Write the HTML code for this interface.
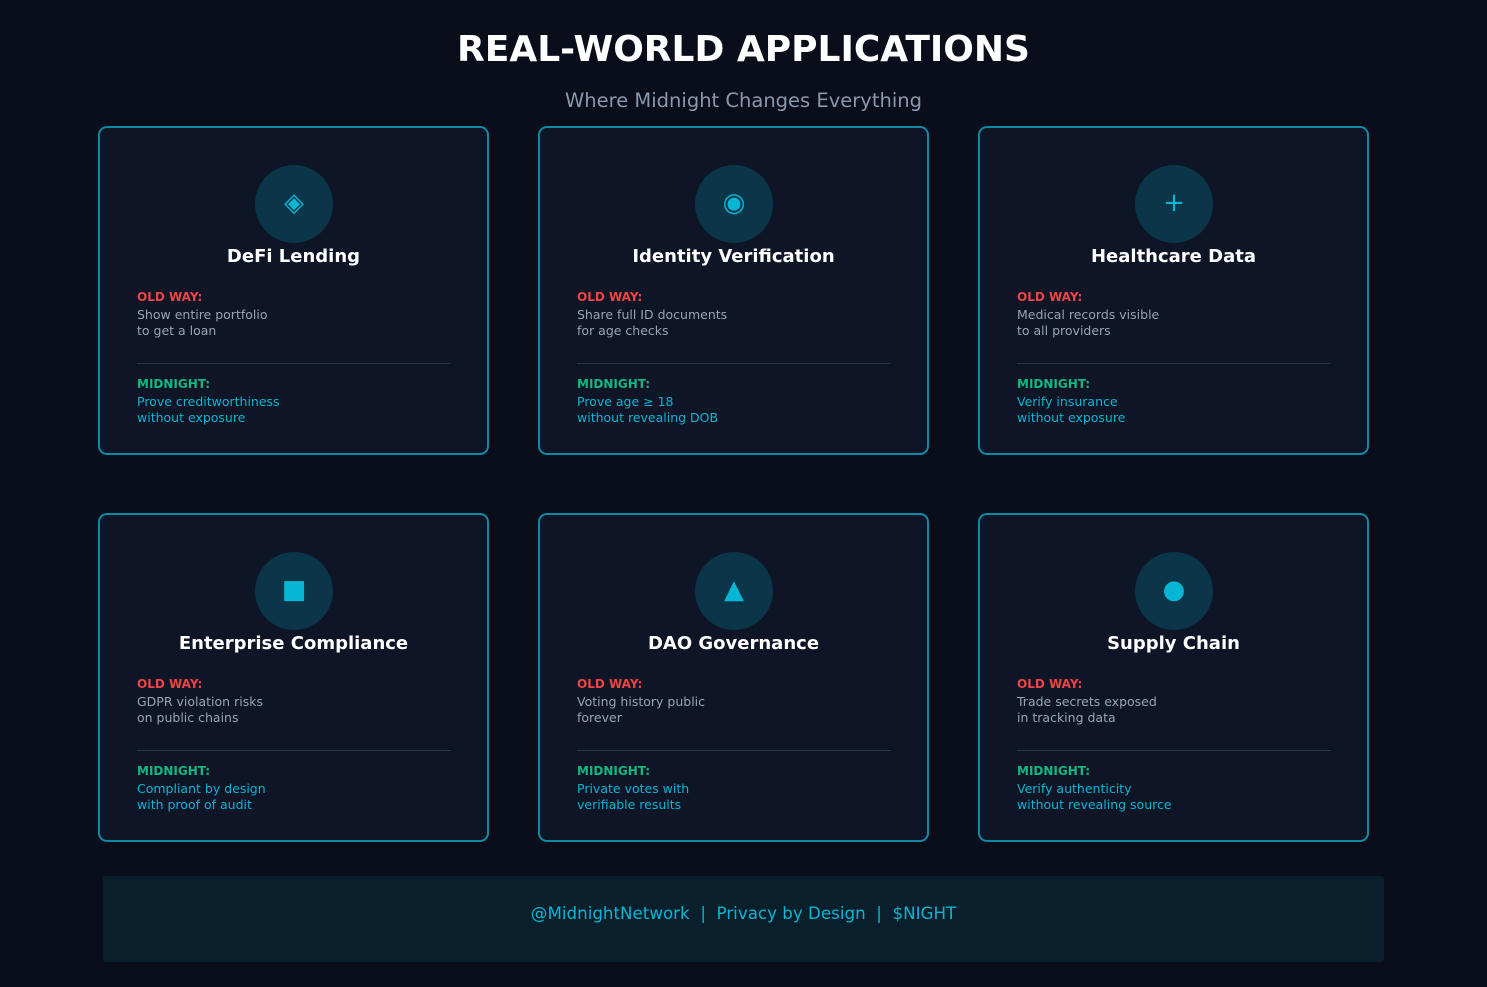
<!DOCTYPE html>
<html><head><meta charset="utf-8"><style>
*{margin:0;padding:0;box-sizing:border-box}
body{width:1487px;height:987px;background:#0a0e1a;font-family:"DejaVu Sans","Liberation Sans",sans-serif;position:relative;overflow:hidden}
.t{position:absolute;left:0;width:1487px;text-align:center}
h1{position:absolute;left:0;width:1487px;text-align:center;top:29px;font-size:36px;font-weight:bold;color:#fff;line-height:42px}
.sub{top:88px;font-size:19.5px;color:#8a97ad;line-height:26px}
.card{position:absolute;width:391px;height:329px;border:2px solid #0e8aa6;border-radius:9px;background:#0e1526}
.ic{position:absolute;left:155px;top:37px;width:78px;height:78px;border-radius:50%;background:#0b3549;color:#06b6d4;text-align:center;line-height:76px;font-size:26px}
.ct{position:absolute;left:0;width:387px;top:117px;text-align:center;font-size:18px;font-weight:bold;color:#fff;line-height:24px}
.lb{position:absolute;left:37px;font-size:12px;font-weight:bold;line-height:16px}
.bd{position:absolute;left:37px;font-size:12.5px;line-height:16px}
.ow{top:161px;color:#ef4444}.ob{top:179px;color:#9aa3b2}
.hr{position:absolute;left:37px;width:314px;top:235px;height:1px;background:#2a3647}
.ml{top:248px;color:#10b981}.mb{top:266px;color:#06b6d4}
.foot{position:absolute;left:103px;top:876px;width:1281px;height:86px;background:#0a1f2c;border-radius:3px;text-align:center;line-height:74px;font-size:16.7px;color:#06b6d4}
</style></head><body>
<h1>REAL-WORLD APPLICATIONS</h1>
<div class="t sub">Where Midnight Changes Everything</div>

<div class="card" style="left:98px;top:126px"><div class="ic">◈</div><div class="ct">DeFi Lending</div><div class="lb ow">OLD WAY:</div><div class="bd ob">Show entire portfolio<br>to get a loan</div><div class="hr"></div><div class="lb ml">MIDNIGHT:</div><div class="bd mb">Prove creditworthiness<br>without exposure</div></div>
<div class="card" style="left:538px;top:126px"><div class="ic">◉</div><div class="ct">Identity Verification</div><div class="lb ow">OLD WAY:</div><div class="bd ob">Share full ID documents<br>for age checks</div><div class="hr"></div><div class="lb ml">MIDNIGHT:</div><div class="bd mb">Prove age ≥ 18<br>without revealing DOB</div></div>
<div class="card" style="left:978px;top:126px"><div class="ic">+</div><div class="ct">Healthcare Data</div><div class="lb ow">OLD WAY:</div><div class="bd ob">Medical records visible<br>to all providers</div><div class="hr"></div><div class="lb ml">MIDNIGHT:</div><div class="bd mb">Verify insurance<br>without exposure</div></div>

<div class="card" style="left:98px;top:513px"><div class="ic">■</div><div class="ct">Enterprise Compliance</div><div class="lb ow">OLD WAY:</div><div class="bd ob">GDPR violation risks<br>on public chains</div><div class="hr"></div><div class="lb ml">MIDNIGHT:</div><div class="bd mb">Compliant by design<br>with proof of audit</div></div>
<div class="card" style="left:538px;top:513px"><div class="ic">▲</div><div class="ct">DAO Governance</div><div class="lb ow">OLD WAY:</div><div class="bd ob">Voting history public<br>forever</div><div class="hr"></div><div class="lb ml">MIDNIGHT:</div><div class="bd mb">Private votes with<br>verifiable results</div></div>
<div class="card" style="left:978px;top:513px"><div class="ic">●</div><div class="ct">Supply Chain</div><div class="lb ow">OLD WAY:</div><div class="bd ob">Trade secrets exposed<br>in tracking data</div><div class="hr"></div><div class="lb ml">MIDNIGHT:</div><div class="bd mb">Verify authenticity<br>without revealing source</div></div>

<div class="foot">@MidnightNetwork &nbsp;|&nbsp; Privacy by Design &nbsp;|&nbsp; $NIGHT</div>
</body></html>
